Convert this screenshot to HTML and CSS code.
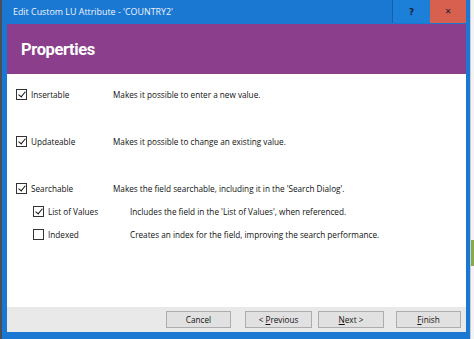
FILE: index.html
```html
<!DOCTYPE html>
<html lang="en">
<head>
    <meta charset="UTF-8">
    <meta name="viewport" content="width=device-width, initial-scale=1.0">
    <title>Edit Custom LU Attribute</title>
    <link rel="stylesheet" href="styles.css">
</head>
<body>
    <div class="desktop">
        <div class="window">
            <div class="titlebar">
                <span class="title">Edit Custom LU Attribute - 'COUNTRY2'</span>
                <button class="tb-btn help">?</button>
                <button class="tb-btn close">&#x2715;</button>
            </div>

            <div class="banner">
                <h1>Properties</h1>
            </div>

            <div class="content">
                <div class="group">
                    <div class="row">
                        <label class="check"><span class="box on"></span>Insertable</label>
                        <span class="desc">Makes it possible to enter a new value.</span>
                    </div>
                </div>

                <div class="group">
                    <div class="row">
                        <label class="check"><span class="box on"></span>Updateable</label>
                        <span class="desc">Makes it possible to change an existing value.</span>
                    </div>
                </div>

                <div class="group">
                    <div class="row">
                        <label class="check"><span class="box on"></span>Searchable</label>
                        <span class="desc">Makes the field searchable, including it in the 'Search Dialog'.</span>
                    </div>
                    <div class="row sub">
                        <label class="check"><span class="box on"></span>List of Values</label>
                        <span class="desc">Includes the field in the 'List of Values', when referenced.</span>
                    </div>
                    <div class="row sub">
                        <label class="check"><span class="box"></span>Indexed</label>
                        <span class="desc">Creates an index for the field, improving the search performance.</span>
                    </div>
                </div>
            </div>

            <div class="footer">
                <button class="btn cancel">Cancel</button>
                <button class="btn prev">&lt; <u>P</u>revious</button>
                <button class="btn next"><u>N</u>ext &gt;</button>
                <button class="btn finish"><u>F</u>inish</button>
            </div>
        </div>
        <div class="side">
            <div class="side-mark"></div>
        </div>
    </div>
</body>
</html>
```

FILE: styles.css
```css
* {
    margin: 0;
    padding: 0;
    box-sizing: border-box;
}

body {
    font-family: 'Open Sans', 'Noto Sans', sans-serif;
    background: #4a4f55;
    width: 474px;
    height: 339px;
    overflow: hidden;
}

.desktop {
    display: flex;
    height: 339px;
    padding-left: 2px;
}

.window {
    width: 468px;
    height: 339px;
    background: #1b78d2;
    padding: 0 4px 7px 5px;
    display: flex;
    flex-direction: column;
}

.side {
    flex: 1;
    background: #f2f3f5;
    border-left: 1px solid #c9ccd0;
    padding-top: 240px;
}

.side-mark {
    height: 26px;
    background: #86aa4c;
}

/* title bar */

.titlebar {
    height: 24px;
    display: flex;
    align-items: stretch;
}

.title {
    flex: 1;
    color: #eef5fc;
    font-size: 8.9px;
    line-height: 24px;
    padding-left: 6px;
}

.tb-btn {
    border: none;
    font-family: 'DejaVu Sans', sans-serif;
    font-weight: bold;
    color: #1a1f33;
    height: 23px;
}

.help {
    width: 38px;
    background: #1d80d8;
    border-left: 1px solid #1561a8;
    font-size: 9px;
}

.close {
    width: 36px;
    background: #d7604e;
    font-size: 8px;
}

/* purple banner */

.banner {
    height: 50px;
    background: #8a3e8b;
    display: flex;
    align-items: center;
    padding-left: 14px;
}

.banner h1 {
    color: #fff;
    font-family: 'Roboto', sans-serif;
    font-weight: bold;
    font-size: 16.5px;
    letter-spacing: -0.4px;
}

/* option rows */

.content {
    height: 233px;
    background: #fff;
    padding: 9px 0 0 9px;
}

.group {
    margin-bottom: 24px;
}

.row {
    height: 23px;
    display: flex;
    align-items: center;
    font-size: 8.2px;
    color: #111;
}

.row.sub {
    padding-left: 17px;
}

.check {
    width: 97px;
    display: flex;
    align-items: center;
    gap: 4px;
}

.box {
    width: 11px;
    height: 11px;
    border: 1px solid #333;
    background: #fff;
    position: relative;
}

.box.on::after {
    content: "";
    position: absolute;
    left: 3px;
    top: 0px;
    width: 3px;
    height: 6px;
    border: solid #111;
    border-width: 0 1.6px 1.6px 0;
    transform: rotate(40deg);
}

/* button bar */

.footer {
    height: 25px;
    background: #e9e9e9;
    display: flex;
    align-items: center;
    justify-content: flex-end;
    padding-right: 5px;
}

.btn {
    width: 66px;
    height: 17px;
    background: #e1e1e1;
    border: 1px solid #adadad;
    font-family: 'Open Sans', 'Noto Sans', sans-serif;
    font-size: 8.2px;
    color: #111;
}

.prev {
    margin-left: 14px;
    width: 67px;
}

.next {
    margin-left: 6px;
}

.finish {
    margin-left: 12px;
    width: 65px;
}

.cancel {
    width: 65px;
}
```
